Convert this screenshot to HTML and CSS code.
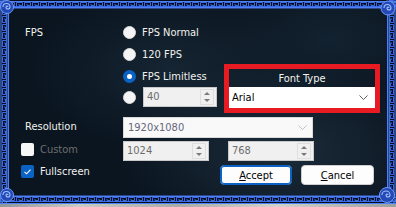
FILE: index.html
```html
<!DOCTYPE html>
<html lang="en">
<head>
    <meta charset="UTF-8">
    <meta name="viewport" content="width=device-width, initial-scale=1.0">
    <title>Settings</title>
    <link rel="stylesheet" href="styles.css">
</head>
<body>
    <div class="dialog">
        <!-- meander frame -->
        <svg class="frame" width="396" height="204" viewBox="0 0 396 204">
            <defs>
                <pattern id="keyH" width="8" height="5" patternUnits="userSpaceOnUse" y="2">
                    <path d="M0 4.5H8M0.5 4.5V0.5H6.5V3.5H3V2" fill="none" stroke="#3a6be6" stroke-width="1"/>
                </pattern>
                <pattern id="keyHb" width="8" height="5" patternUnits="userSpaceOnUse" y="197">
                    <path d="M0 4.5H8M0.5 4.5V0.5H6.5V3.5H3V2" fill="none" stroke="#3a6be6" stroke-width="1"/>
                </pattern>
                <pattern id="keyV" width="5" height="8" patternUnits="userSpaceOnUse" x="2">
                    <path d="M4.5 0V8M4.5 0.5H0.5V6.5H3.5V3H2" fill="none" stroke="#3a6be6" stroke-width="1"/>
                </pattern>
                <pattern id="keyVr" width="5" height="8" patternUnits="userSpaceOnUse" x="389">
                    <path d="M0.5 0V8M0.5 0.5H4.5V6.5H1.5V3H3" fill="none" stroke="#3a6be6" stroke-width="1"/>
                </pattern>
            </defs>
            <rect x="0" y="0" width="396" height="9" fill="#070e20"/>
            <rect x="0" y="195" width="396" height="9" fill="#070e20"/>
            <rect x="0" y="0" width="9" height="204" fill="#070e20"/>
            <rect x="387" y="0" width="9" height="204" fill="#070e20"/>
            <rect x="0" y="2" width="396" height="5" fill="url(#keyH)"/>
            <rect x="0" y="197" width="396" height="5" fill="url(#keyHb)"/>
            <rect x="2" y="0" width="5" height="204" fill="url(#keyV)"/>
            <rect x="389" y="0" width="5" height="204" fill="url(#keyVr)"/>
            <g fill="#4f80f4">
                <rect x="0" y="1" width="396" height="1"/>
                <rect x="8" y="7" width="380" height="1.5"/>
                <rect x="0" y="203" width="396" height="1"/>
                <rect x="8" y="195.5" width="380" height="1.5"/>
                <rect x="0.5" y="0" width="1" height="204"/>
                <rect x="7.5" y="8" width="1.5" height="188"/>
                <rect x="394.5" y="0" width="1" height="204"/>
                <rect x="387" y="8" width="1.5" height="188"/>
            </g>
            <g fill="#2548b4" stroke="#6d9bff" stroke-width="1">
                <circle cx="7" cy="7" r="6.5"/>
                <circle cx="388" cy="8" r="7"/>
                <circle cx="7" cy="195" r="6.5"/>
                <circle cx="387" cy="195" r="7.5"/>
            </g>
            <g fill="none" stroke="#9cc0ff" stroke-width="1.1">
                <path d="M8 7A1 1 0 0 0 6 7A2 2 0 0 0 10 7A3.5 3.5 0 0 0 3 7"/>
                <path d="M389 8A1 1 0 0 0 387 8A2 2 0 0 0 391 8A3.5 3.5 0 0 0 384 8"/>
                <path d="M8 195A1 1 0 0 0 6 195A2 2 0 0 0 10 195A3.5 3.5 0 0 0 3 195"/>
                <path d="M388 195A1 1 0 0 0 386 195A2 2 0 0 0 390 195A4 4 0 0 0 382 195"/>
            </g>
        </svg>

        <div class="fps-grid">
            <div class="label fps-label">FPS</div>
            <div class="radio r1"><span class="dot"></span>FPS Normal</div>
            <div class="radio r2"><span class="dot"></span>120 FPS</div>
            <div class="radio r3"><span class="dot on"></span>FPS Limitless</div>
            <div class="radio r4">
                <span class="dot"></span>
                <div class="spin spin-fps">
                    <span class="val">40</span>
                    <span class="arrows"><i class="up"></i><i class="down"></i></span>
                </div>
            </div>
            <div class="font-box">
                <div class="font-title">Font Type</div>
                <div class="select font-select">
                    <span>Arial</span>
                    <svg width="9" height="5" viewBox="0 0 9 5"><polyline points="0.5,0.5 4.5,4.5 8.5,0.5" fill="none" stroke="#5c5c5c" stroke-width="1"/></svg>
                </div>
            </div>
        </div>

        <div class="row res-row">
            <div class="label label-col">Resolution</div>
            <div class="select res-select">
                <span>1920x1080</span>
                <svg width="9" height="5" viewBox="0 0 9 5"><polyline points="0.5,0.5 4.5,4.5 8.5,0.5" fill="none" stroke="#c2c2c2" stroke-width="1"/></svg>
            </div>
        </div>

        <div class="row custom-row">
            <div class="check-group">
                <span class="box"></span>
                <span class="muted">Custom</span>
            </div>
            <div class="spin spin-w">
                <span class="val">1024</span>
                <span class="arrows"><i class="up"></i><i class="down"></i></span>
            </div>
            <div class="spin spin-w spin-h">
                <span class="val">768</span>
                <span class="arrows"><i class="up"></i><i class="down"></i></span>
            </div>
        </div>

        <div class="row full-row">
            <div class="check-group">
                <span class="box checked">
                    <svg width="13" height="13" viewBox="0 0 13 13"><polyline points="3.5,6.8 5.6,8.8 9.5,4.6" fill="none" stroke="#fff" stroke-width="1.1"/></svg>
                </span>
                <span class="label">Fullscreen</span>
            </div>
            <button class="btn btn-accept"><u>A</u>ccept</button>
            <button class="btn btn-cancel"><u>C</u>ancel</button>
        </div>
    </div>
    <div class="ground"></div>
</body>
</html>
```

FILE: styles.css
```css
body {
    margin: 0;
    width: 396px;
    height: 207px;
    overflow: hidden;
    background: #0b1622;
    font-family: "DejaVu Sans Condensed", "DejaVu Sans", sans-serif;
    font-stretch: condensed;
    font-size: 11px;
    color: #f2f2ee;
}
.dialog {
    position: relative;
    height: 204px;
    box-sizing: border-box;
    padding-top: 22px;
    background:
        radial-gradient(ellipse 160px 90px at 280px 150px, #1c2c3b 0%, rgba(28, 44, 59, 0) 100%),
        radial-gradient(ellipse 140px 80px at 170px 70px, #162533 0%, rgba(22, 37, 51, 0) 100%),
        radial-gradient(ellipse 120px 70px at 330px 40px, #132230 0%, rgba(19, 34, 48, 0) 100%),
        #0a1520;
}
.frame {
    position: absolute;
    top: 0;
    left: 0;
    pointer-events: none;
}
.ground {
    height: 3px;
    background: linear-gradient(90deg, #8f979a, #c9cbc4 20%, #a8aca8 45%, #d2d2ca 70%, #9aa0a0);
}

/* fps block */
.fps-grid {
    display: grid;
    grid-template-columns: 123px 101px 156px;
    grid-template-rows: 21px 22px 22px 20px;
}
.fps-label {
    grid-column: 1;
    grid-row: 1;
    padding-left: 25px;
    display: flex;
    align-items: center;
}
.radio {
    grid-column: 2;
    display: flex;
    align-items: center;
    gap: 6px;
    white-space: nowrap;
}
.r1 { grid-row: 1; }
.r2 { grid-row: 2; }
.r3 { grid-row: 3; }
.r4 { grid-row: 4; gap: 7px; }
.dot {
    width: 13px;
    height: 13px;
    box-sizing: border-box;
    border-radius: 50%;
    background: #f4f4f4;
    border: 1px solid #dcdcdc;
    flex: none;
}
.dot.on {
    background: #fff;
    border: 4px solid #0a62c4;
}

.font-box {
    grid-column: 3;
    grid-row: 3 / 5;
    margin: -1px 0 -6px;
    border: 5px solid #e81a22;
    display: flex;
    flex-direction: column;
}
.font-title {
    height: 18px;
    display: flex;
    align-items: center;
    justify-content: center;
}

.select {
    display: flex;
    align-items: center;
    justify-content: space-between;
    box-sizing: border-box;
}
.font-select {
    flex: 1;
    background: #fff;
    color: #000;
    padding: 0 7px 0 3px;
}
.res-select {
    width: 190px;
    height: 21px;
    border: 1px solid #dadada;
    background: #f9f9f9;
    color: #66667c;
    padding: 0 5px 0 4px;
}

/* spin boxes */
.spin {
    display: flex;
    height: 20px;
    box-sizing: border-box;
    border: 1px solid #c9c9c9;
    background: #f0f0f0;
    color: #6d6d6d;
}
.spin-fps { width: 74px; }
.spin-w { width: 86px; }
.spin-h { margin-left: 19px; }
.spin .val {
    flex: 1;
    padding-left: 3px;
    line-height: 18px;
}
.spin .arrows {
    width: 12px;
    margin: 1px 2px 1px 0;
    display: flex;
    flex-direction: column;
    border: 1px solid #dedede;
}
.spin .arrows i {
    flex: 1;
    display: flex;
    align-items: center;
    justify-content: center;
}
.spin .arrows i::before {
    content: "";
    border-left: 3px solid transparent;
    border-right: 3px solid transparent;
}
.spin .arrows .up::before { border-bottom: 3px solid #7a7a7a; }
.spin .arrows .down::before { border-top: 3px solid #7a7a7a; }

/* lower rows */
.row {
    display: flex;
    align-items: flex-start;
}
.label-col {
    width: 123px;
    box-sizing: border-box;
    padding-left: 25px;
    line-height: 20px;
}
.res-row { margin-top: 10px; }
.custom-row { margin-top: 3px; }
.full-row { margin-top: 4px; }
.check-group {
    width: 123px;
    box-sizing: border-box;
    padding-left: 21px;
    height: 13px;
    display: flex;
    align-items: center;
    gap: 6px;
    flex: none;
}
.custom-row .check-group { margin-top: 2px; }
.box {
    width: 13px;
    height: 13px;
    box-sizing: border-box;
    border-radius: 2px;
    background: #f6f6f6;
    flex: none;
}
.box.checked {
    background: #0a62c4;
}
.box svg { display: block; }
.muted { color: #6d6d6d; }

.btn {
    height: 20px;
    box-sizing: border-box;
    padding: 0;
    border: 1px solid #cfcfcf;
    border-radius: 4px;
    background: #fdfdfd;
    color: #000;
    font: inherit;
}
.btn-accept {
    margin-left: 97px;
    width: 72px;
    border-color: #0a62c4;
    box-shadow: inset 0 0 0 1px #0a62c4;
}
.btn-cancel {
    margin-left: 9px;
    width: 73px;
}
```
